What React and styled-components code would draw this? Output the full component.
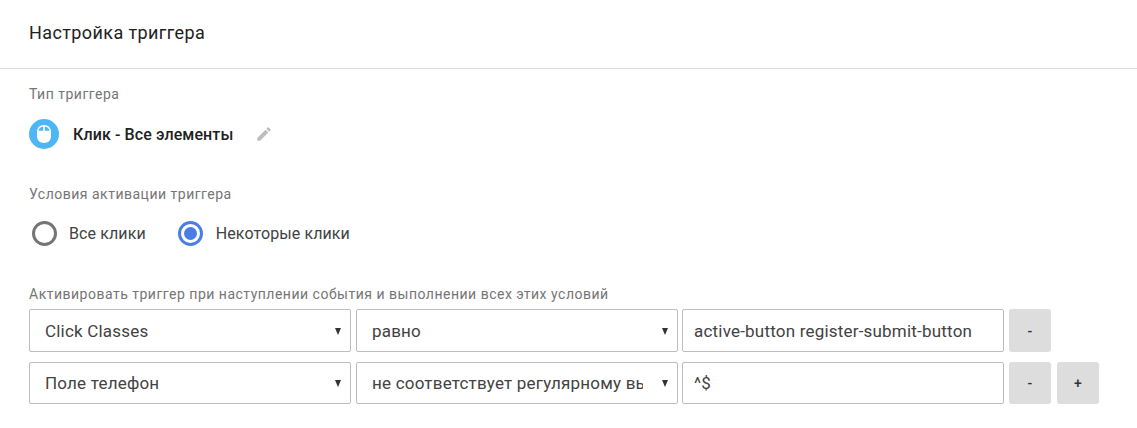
import React from "react";
import styled, { createGlobalStyle } from "styled-components";

const GlobalStyle = createGlobalStyle`
  html, body {
    margin: 0;
    background: #fff;
    font-family: Roboto, "Noto Sans", sans-serif;
    -webkit-font-smoothing: antialiased;
  }
`;

const Page = styled.div`
  width: 1137px;
  height: 428px;
  overflow: hidden;
`;

const Header = styled.header`
  height: 69px;
  box-sizing: border-box;
  border-bottom: 1px solid #ddd;
  padding: 21px 29px 0;
  font-size: 18px;
  line-height: 24px;
  letter-spacing: 0.4px;
  color: #212121;
`;

const Body = styled.div`
  padding: 16px 29px 0;
  display: flex;
  flex-direction: column;
`;

const Label = styled.div`
  font-size: 14px;
  line-height: 18px;
  letter-spacing: 0.5px;
  color: #757575;
`;

const TypeRow = styled.div`
  display: flex;
  align-items: center;
  height: 30px;
  margin: 16px 0 36px;
`;

const TypeBadge = styled.div`
  width: 30px;
  height: 30px;
  border-radius: 50%;
  background: #4db6f5;
  display: flex;
  align-items: center;
  justify-content: center;
`;

const TypeName = styled.div`
  margin-left: 14px;
  font-size: 16px;
  font-weight: 500;
  letter-spacing: 0.1px;
  color: #212121;
`;

const EditButton = styled.div`
  display: flex;
  margin-left: 22px;
`;

const RadioRow = styled.div`
  display: flex;
  align-items: center;
  margin: 17px 0 39px 3px;
  height: 26px;
`;

const RadioItem = styled.label`
  display: flex;
  align-items: center;
  font-size: 16px;
  letter-spacing: 0.1px;
  color: #424242;
  margin-right: 32px;
`;

const RadioCircle = styled.span`
  width: 25px;
  height: 25px;
  box-sizing: border-box;
  border-radius: 50%;
  border: 3px solid ${({ $checked }) => ($checked ? "#4a7de6" : "#757575")};
  margin-right: ${({ $checked }) => ($checked ? "13px" : "12px")};
  display: flex;
  align-items: center;
  justify-content: center;

  &::after {
    content: "";
    display: ${({ $checked }) => ($checked ? "block" : "none")};
    width: 13px;
    height: 13px;
    border-radius: 50%;
    background: #4a7de6;
  }
`;

const ConditionList = styled.div`
  margin-top: 6px;
  display: flex;
  flex-direction: column;
  gap: 10px;
`;

const ConditionRow = styled.div`
  display: flex;
  height: 43px;
`;

const Select = styled.div`
  position: relative;
  width: 322px;
  height: ${({ $short }) => ($short ? "42px" : "43px")};
  box-sizing: border-box;
  border: 1px solid #bdbdbd;
  border-radius: 2px;
  margin-right: ${({ $tight }) => ($tight ? "4px" : "5px")};
  padding: 0 34px 0 15px;
  display: flex;
  align-items: center;
  font-size: 17px;
  letter-spacing: 0.2px;
  color: #424242;
  background: #fff;

  &::after {
    content: "";
    position: absolute;
    right: 9px;
    top: 50%;
    margin-top: -3px;
    border-left: 3.5px solid transparent;
    border-right: 3.5px solid transparent;
    border-top: 7px solid #333;
  }
`;

const SelectValue = styled.span`
  display: block;
  overflow: hidden;
  white-space: nowrap;
`;

const TextField = styled.div`
  width: 322px;
  height: ${({ $short }) => ($short ? "42px" : "43px")};
  box-sizing: border-box;
  border: 1px solid #bdbdbd;
  border-radius: 2px;
  padding: 0 11px;
  display: flex;
  align-items: center;
  font-size: 17px;
  letter-spacing: 0.2px;
  color: #424242;
  white-space: nowrap;
`;

const RowButton = styled.button`
  width: 42px;
  height: ${({ $short }) => ($short ? "42px" : "43px")};
  margin-left: ${({ $wide }) => ($wide ? "6px" : "5px")};
  padding: 0;
  border: 0;
  border-radius: 3px;
  background: #ddd;
  color: #333;
  font-family: inherit;
  font-size: 14px;
  font-weight: 500;
`;

const MouseIcon = () => (
  <svg width="14" height="18" viewBox="0 0 14 18">
    <path fill="#fff" d="M7 0C3 0 0 2.800 0 6.500v5C0 15.200 3 18 7 18s7-2.800 7-6.500v-5C14 2.800 11 0 7 0z" />
    <path fill="#4db6f5" d="M6.200 1.500C3.600 1.800 1.700 3.500 1.400 5.800h4.800zM7.800 1.500v4.300h4.800c-.3-2.300-2.200-4-4.800-4.300z" />
  </svg>
);

const PencilIcon = () => (
  <svg width="18" height="18" viewBox="0 0 24 24" fill="#bdbdbd">
    <path d="M3 17.250V21h3.750L17.810 9.940l-3.750-3.750L3 17.250zM20.710 7.040a1 1 0 0 0 0-1.410l-2.340-2.340a1 1 0 0 0-1.410 0l-1.830 1.830 3.750 3.750 1.830-1.830z" />
  </svg>
);

const App = () => (
  <Page>
    <GlobalStyle />
    <Header>Настройка триггера</Header>
    <Body>
      <Label>Тип триггера</Label>
      <TypeRow>
        <TypeBadge>
          <MouseIcon />
        </TypeBadge>
        <TypeName>Клик - Все элементы</TypeName>
        <EditButton>
          <PencilIcon />
        </EditButton>
      </TypeRow>
      <Label>Условия активации триггера</Label>
      <RadioRow>
        <RadioItem>
          <RadioCircle />
          Все клики
        </RadioItem>
        <RadioItem>
          <RadioCircle $checked />
          Некоторые клики
        </RadioItem>
      </RadioRow>
      <Label>Активировать триггер при наступлении события и выполнении всех этих условий</Label>
      <ConditionList>
        <ConditionRow>
          <Select><SelectValue>Click Classes</SelectValue></Select>
          <Select $tight><SelectValue>равно</SelectValue></Select>
          <TextField>active-button register-submit-button</TextField>
          <RowButton>-</RowButton>
        </ConditionRow>
        <ConditionRow>
          <Select $short><SelectValue>Поле телефон</SelectValue></Select>
          <Select $short $tight><SelectValue>не соответствует регулярному выражению</SelectValue></Select>
          <TextField $short>^$</TextField>
          <RowButton $short>-</RowButton>
          <RowButton $short $wide>+</RowButton>
        </ConditionRow>
      </ConditionList>
    </Body>
  </Page>
);

export default App;
